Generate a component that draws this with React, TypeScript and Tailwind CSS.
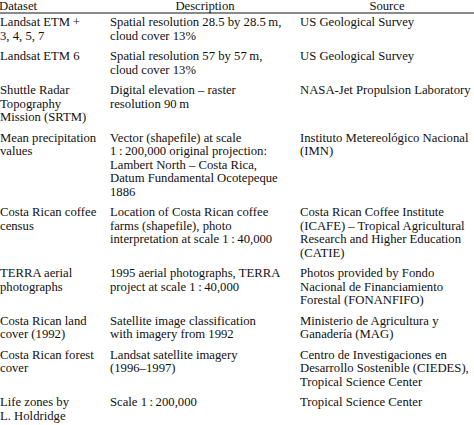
const rows: [string[], string[], string[]][] = [
  [
    ["Landsat ETM\u2009+", "3, 4, 5, 7"],
    ["Spatial resolution 28.5 by 28.5\u2009m,", "cloud cover 13%"],
    ["US Geological Survey"],
  ],
  [
    ["Landsat ETM 6"],
    ["Spatial resolution 57 by 57\u2009m,", "cloud cover 13%"],
    ["US Geological Survey"],
  ],
  [
    ["Shuttle Radar", "Topography", "Mission (SRTM)"],
    ["Digital elevation \u2013 raster", "resolution 90\u2009m"],
    ["NASA-Jet Propulsion Laboratory"],
  ],
  [
    ["Mean precipitation", "values"],
    [
      "Vector (shapefile) at scale",
      "1\u2009:\u2009200,000 original projection:",
      "Lambert North \u2013 Costa Rica,",
      "Datum Fundamental Ocotepeque",
      "1886",
    ],
    ["Instituto Metereológico Nacional", "(IMN)"],
  ],
  [
    ["Costa Rican coffee", "census"],
    ["Location of Costa Rican coffee", "farms (shapefile), photo", "interpretation at scale 1\u2009:\u200940,000"],
    ["Costa Rican Coffee Institute", "(ICAFE) \u2013 Tropical Agricultural", "Research and Higher Education", "(CATIE)"],
  ],
  [
    ["TERRA aerial", "photographs"],
    ["1995 aerial photographs, TERRA", "project at scale 1\u2009:\u200940,000"],
    ["Photos provided by Fondo", "Nacional de Financiamiento", "Forestal (FONANFIFO)"],
  ],
  [
    ["Costa Rican land", "cover (1992)"],
    ["Satellite image classification", "with imagery from 1992"],
    ["Ministerio de Agricultura y", "Ganadería (MAG)"],
  ],
  [
    ["Costa Rican forest", "cover"],
    ["Landsat satellite imagery", "(1996\u20131997)"],
    ["Centro de Investigaciones en", "Desarrollo Sostenible (CIEDES),", "Tropical Science Center"],
  ],
  [
    ["Life zones by", "L. Holdridge"],
    ["Scale 1\u2009:\u2009200,000"],
    ["Tropical Science Center"],
  ],
];

function Cell({ lines }: { lines: string[] }) {
  return (
    <div className="whitespace-nowrap">
      {lines.map((l, i) => (
        <div key={i}>{l}</div>
      ))}
    </div>
  );
}

export default function App() {
  return (
    <div
      className="w-[474px] h-[425px] overflow-hidden bg-white text-[#111111] text-[12.7px] leading-[13.5px]"
      style={{ fontFamily: '"Liberation Serif", "Times New Roman", serif' }}
    >
      <div className="grid grid-cols-[110px_190px_1fr] h-[14px] items-end pb-[1px] border-b-2 border-[#8a8a8a]">
        <div className="-ml-[1px]">Dataset</div>
        <div className="text-center">Description</div>
        <div className="text-center">Source</div>
      </div>
      <div className="pt-[2px] flex flex-col gap-[7px]">
        {rows.map((r, i) => (
          <div key={i} className="grid grid-cols-[110px_190px_1fr]">
            <Cell lines={r[0]} />
            <Cell lines={r[1]} />
            <Cell lines={r[2]} />
          </div>
        ))}
      </div>
    </div>
  );
}
